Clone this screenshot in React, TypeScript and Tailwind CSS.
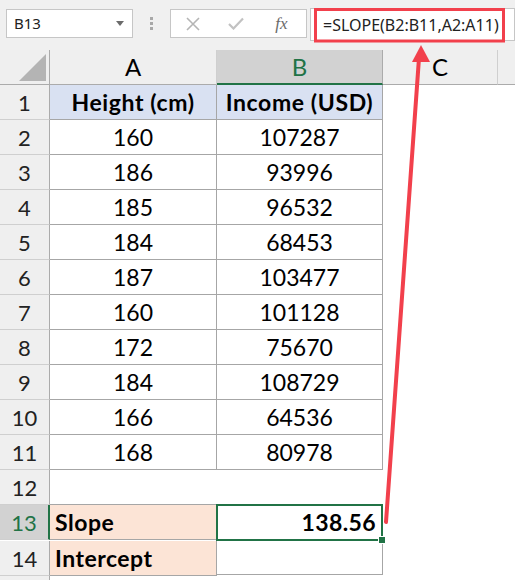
import React from "react";

const data: [number, number][] = [
  [160, 107287],
  [186, 93996],
  [185, 96532],
  [184, 68453],
  [187, 103477],
  [160, 101128],
  [172, 75670],
  [184, 108729],
  [166, 64536],
  [168, 80978],
];

const cellFont = { fontFamily: "Lato, 'Open Sans', sans-serif" };
const uiFont = { fontFamily: "'Noto Sans', 'Open Sans', sans-serif" };

function RowHead({ n, active }: { n: number; active?: boolean }) {
  return (
    <div
      className={`h-[35px] flex items-center justify-center text-[22px] border-b border-[#cfcfcf] ${
        active
          ? "bg-[#d2d2d2] text-[#217346] border-r-2 border-r-[#217346]"
          : "bg-[#efefef] text-[#222] border-r border-r-[#ababab]"
      }`}
    >
      {n}
    </div>
  );
}

export default function App() {
  return (
    <div className="relative w-[515px] h-[580px] overflow-hidden bg-white text-black" style={cellFont}>
      {/* Toolbar */}
      <div className="h-[50px] bg-[#f0f0f0] flex items-start pt-[9px] pl-[6px]" style={uiFont}>
        <div className="w-[127px] h-[29px] bg-white border border-[#c6c6c6] flex items-center justify-between pl-[7px] pr-[8px]">
          <span className="text-[15px] text-[#222]">B13</span>
          <svg width="8" height="5" viewBox="0 0 8 5">
            <polygon points="0,0 8,0 4,5" fill="#6b6b6b" />
          </svg>
        </div>
        <div className="w-[37px] h-[29px] flex flex-col items-center justify-center gap-[2px]">
          <div className="w-[3px] h-[3px] bg-[#a8a8a8]" />
          <div className="w-[3px] h-[3px] bg-[#a8a8a8]" />
          <div className="w-[3px] h-[3px] bg-[#a8a8a8]" />
        </div>
        <div className="w-[137px] h-[29px] bg-white border border-[#c6c6c6] flex items-center">
          <div className="w-[44px] flex justify-center">
            <svg width="14" height="14" viewBox="0 0 14 14">
              <path d="M1 1 L13 13 M13 1 L1 13" stroke="#b5b5b5" strokeWidth="1.6" />
            </svg>
          </div>
          <div className="w-[42px] flex justify-center">
            <svg width="16" height="13" viewBox="0 0 16 13">
              <path d="M1 7 L5.5 11.5 L15 1.5" stroke="#c2c2c2" strokeWidth="2.2" fill="none" />
            </svg>
          </div>
          <div className="flex-1 flex justify-center">
            <span className="text-[17px] italic text-[#6a6a6a]" style={{ fontFamily: "'Liberation Serif', serif" }}>
              fx
            </span>
          </div>
        </div>
        <div className="ml-[3px] flex-1 h-[33px] -mt-[1px] bg-white border border-[#c6c6c6] flex items-center pl-[12px]">
          <span className="text-[16px] text-[#222]">=SLOPE(B2:B11,A2:A11)</span>
        </div>
      </div>

      {/* Grid */}
      <div className="grid grid-cols-[50px_167px_166px_115px_1fr]">
        {/* column headers */}
        <div className="h-[35px] bg-[#efefef] border-r border-b border-[#ababab] flex items-end justify-end pr-[3px] pb-[3px]">
          <svg width="27" height="27" viewBox="0 0 27 27">
            <polygon points="0,27 27,27 27,0" fill="#b4b4b4" />
          </svg>
        </div>
        <div className="h-[35px] bg-[#efefef] border-r border-r-[#cfcfcf] border-b border-b-[#ababab] flex items-center justify-center text-[24px]">
          A
        </div>
        <div className="h-[35px] bg-[#d2d2d2] border-r border-r-[#ababab] border-b-2 border-b-[#217346] flex items-center justify-center text-[24px] text-[#217346]">
          B
        </div>
        <div className="h-[35px] bg-[#efefef] border-r border-r-[#cfcfcf] border-b border-b-[#ababab] flex items-center justify-center text-[24px]">
          C
        </div>
        <div className="h-[35px] bg-[#efefef] border-b border-b-[#ababab]" />

        {/* row 1 */}
        <RowHead n={1} />
        <div className="h-[35px] bg-[#d9e1f2] border-r border-b border-[#a6a6a6] flex items-center justify-center text-[23px] font-bold tracking-[0.6px]">
          Height (cm)
        </div>
        <div className="h-[35px] bg-[#d9e1f2] border-r border-b border-[#a6a6a6] flex items-center justify-center text-[23px] font-bold tracking-[0.6px]">
          Income (USD)
        </div>
        <div />
        <div />

        {data.map(([h, inc], i) => (
          <React.Fragment key={i}>
            <RowHead n={i + 2} />
            <div className="h-[35px] border-r border-b border-[#a6a6a6] flex items-center justify-center text-[23px]">
              {h}
            </div>
            <div className="h-[35px] border-r border-b border-[#a6a6a6] flex items-center justify-center text-[23px]">
              {inc}
            </div>
            <div />
            <div />
          </React.Fragment>
        ))}

        {/* row 12 */}
        <RowHead n={12} />
        <div />
        <div />
        <div />
        <div />

        {/* row 13 */}
        <RowHead n={13} active />
        <div className="bg-[#fce4d6] border-r border-t border-b border-[#a6a6a6] -mt-[1px] h-[36px] flex items-center pl-[5px] text-[23px] font-bold tracking-[0.5px]">
          Slope
        </div>
        <div className="relative -mt-[1px] -ml-[1px] h-[37px] border-2 border-[#217346] flex items-center justify-end pr-[5px] text-[23px] font-bold tracking-[0.4px] z-10">
          138.56
          <div className="absolute -right-[4px] -bottom-[4px] w-[6px] h-[6px] bg-[#217346] outline outline-1 outline-white" />
        </div>
        <div />
        <div />

        {/* row 14 */}
        <RowHead n={14} />
        <div className="h-[35px] bg-[#fce4d6] border-r border-b border-[#a6a6a6] flex items-center pl-[5px] text-[23px] font-bold tracking-[0.5px]">
          Intercept
        </div>
        <div className="h-[35px] -mt-[1px] border-r border-b border-[#a6a6a6]" />
        <div />
        <div />

        {/* row 15 (partial) */}
        <div className="h-[10px] bg-[#efefef] border-r border-[#ababab]" />
        <div />
        <div />
        <div />
        <div />
      </div>

      {/* Annotation overlay */}
      <svg className="absolute inset-0 pointer-events-none z-20" width="515" height="580" viewBox="0 0 515 580">
        <rect x="315.5" y="9.5" width="188" height="31.5" fill="none" stroke="#f2404c" strokeWidth="3" />
        <line x1="386" y1="522" x2="419" y2="58" stroke="#f2404c" strokeWidth="4" strokeLinecap="round" />
        <polygon points="421,45 412,62 430,62" fill="#f2404c" />
      </svg>
    </div>
  );
}
